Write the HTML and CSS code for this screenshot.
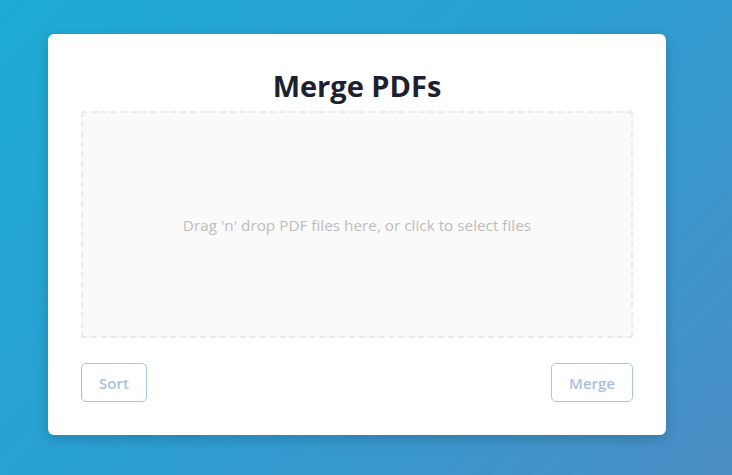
FILE: index.html
```html
<!DOCTYPE html>
<html>
<head>
    <title>Merge PDFs</title>
    <link rel="stylesheet" href="styles.css">
</head>
<body>
    <div class="card">
        <h1>Merge PDFs</h1>
        <div class="dropzone">
            <p>Drag 'n' drop PDF files here, or click to select files</p>
        </div>
        <div class="actions">
            <button class="btn" disabled>Sort</button>
            <button class="btn" disabled>Merge</button>
        </div>
    </div>
</body>
</html>
```

FILE: styles.css
```css
html, body {
    height: 100%;
}
body {
    margin: 0;
    font-family: "Open Sans", "Noto Sans", sans-serif;
    background: linear-gradient(135deg, #1fabd6 0%, #2aa0d3 45%, #4b8ec5 100%);
    overflow: hidden;
}
.card {
    box-sizing: border-box;
    width: 618px;
    margin: 34px 0 0 48px;
    padding: 33px;
    background: #fff;
    border-radius: 6px;
    box-shadow: 0 4px 14px rgba(0, 0, 0, 0.18);
}
h1 {
    margin: 0 0 6px;
    text-align: center;
    font-size: 29px;
    line-height: 38px;
    font-weight: 700;
    color: #1c2130;
}
.dropzone {
    box-sizing: border-box;
    height: 227px;
    display: flex;
    align-items: center;
    justify-content: center;
    background: #fafafa;
    border: 2px dashed #eaeaea;
    border-radius: 2px;
    cursor: pointer;
}
.dropzone p {
    margin: 0;
    font-size: 15.3px;
    color: #bdbdbd;
}
.actions {
    display: flex;
    justify-content: space-between;
    margin-top: 25px;
}
.btn {
    height: 39px;
    padding: 0 17px;
    background: #fff;
    border: 1px solid #a9c5e1;
    border-radius: 5px;
    font-family: inherit;
    font-size: 15px;
    font-weight: 600;
    color: #a6c2e0;
}
```
